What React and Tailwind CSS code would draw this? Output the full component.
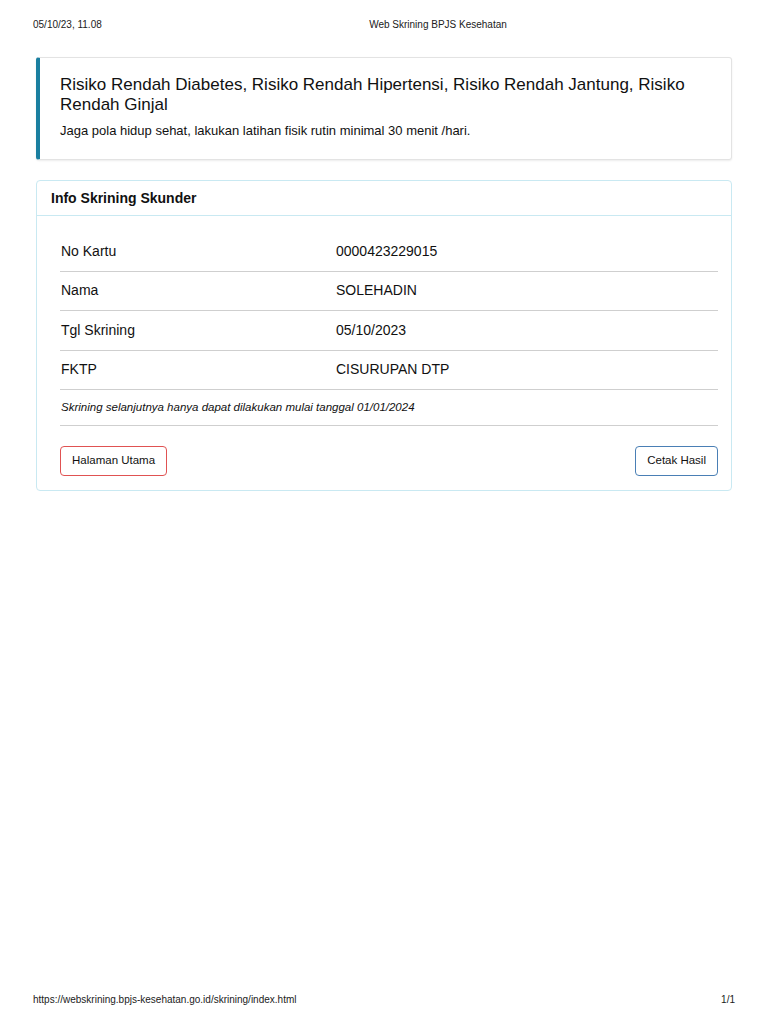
import React from "react";

export default function App() {
  const rows = [
    ["No Kartu", "0000423229015"],
    ["Nama", "SOLEHADIN"],
    ["Tgl Skrining", "05/10/2023"],
    ["FKTP", "CISURUPAN DTP"],
  ];
  return (
    <div
      className="w-[768px] h-[1024px] bg-white text-[#212121] flex flex-col"
      style={{ fontFamily: '"Liberation Sans", Arial, sans-serif' }}
    >
      <div className="flex items-center h-[48px] px-[33px] text-[10px] relative">
        <span>05/10/23, 11.08</span>
        <span className="absolute left-0 right-0 text-center pl-[108px]">Web Skrining BPJS Kesehatan</span>
      </div>
      <div className="px-[36px] pt-[9px]">
        <div className="border border-[#e3e3e3] border-l-[4px] border-l-[#1a7fa0] rounded-[3px] shadow-[0_1px_2px_rgba(0,0,0,0.08)] pl-[20px] pr-[20px] pt-[17px] pb-[20px]">
          <div className="text-[17px] leading-[20px] text-[#111]">
            Risiko Rendah Diabetes, Risiko Rendah Hipertensi, Risiko Rendah Jantung, Risiko Rendah Ginjal
          </div>
          <div className="text-[13px] leading-[16px] mt-[8px] text-[#111]">
            Jaga pola hidup sehat, lakukan latihan fisik rutin minimal 30 menit /hari.
          </div>
        </div>
        <div className="mt-[20px] border border-[#c9e9f2] rounded-[4px]">
          <div className="h-[35px] flex items-center px-[14px] border-b border-[#c9e9f2] font-bold text-[14px] text-[#111]">
            Info Skrining Skunder
          </div>
          <div className="pl-[23px] pr-[13px] pt-[16px]">
            {rows.map(([k, v]) => (
              <div key={k} className="flex items-center h-[39.5px] border-b border-[#cfcfcf] text-[14px] text-[#111]">
                <div className="w-[276px] pl-[1px]">{k}</div>
                <div>{v}</div>
              </div>
            ))}
            <div className="flex items-center h-[36px] border-b border-[#cfcfcf] text-[11.5px] italic pl-[1px] text-[#111]">
              Skrining selanjutnya hanya dapat dilakukan mulai tanggal 01/01/2024
            </div>
            <div className="flex justify-between items-center pt-[20px] pb-[14px]">
              <button className="h-[30px] px-[11px] border border-[#e05252] rounded-[4px] text-[11.5px] text-[#111] bg-white">
                Halaman Utama
              </button>
              <button className="h-[30px] px-[11px] border border-[#4a7fb5] rounded-[4px] text-[11.5px] text-[#111] bg-white">
                Cetak Hasil
              </button>
            </div>
          </div>
        </div>
      </div>
      <div className="flex-1" />
      <div className="flex justify-between items-center h-[50px] px-[33px] text-[10px]">
        <span>https://webskrining.bpjs-kesehatan.go.id/skrining/index.html</span>
        <span>1/1</span>
      </div>
    </div>
  );
}
